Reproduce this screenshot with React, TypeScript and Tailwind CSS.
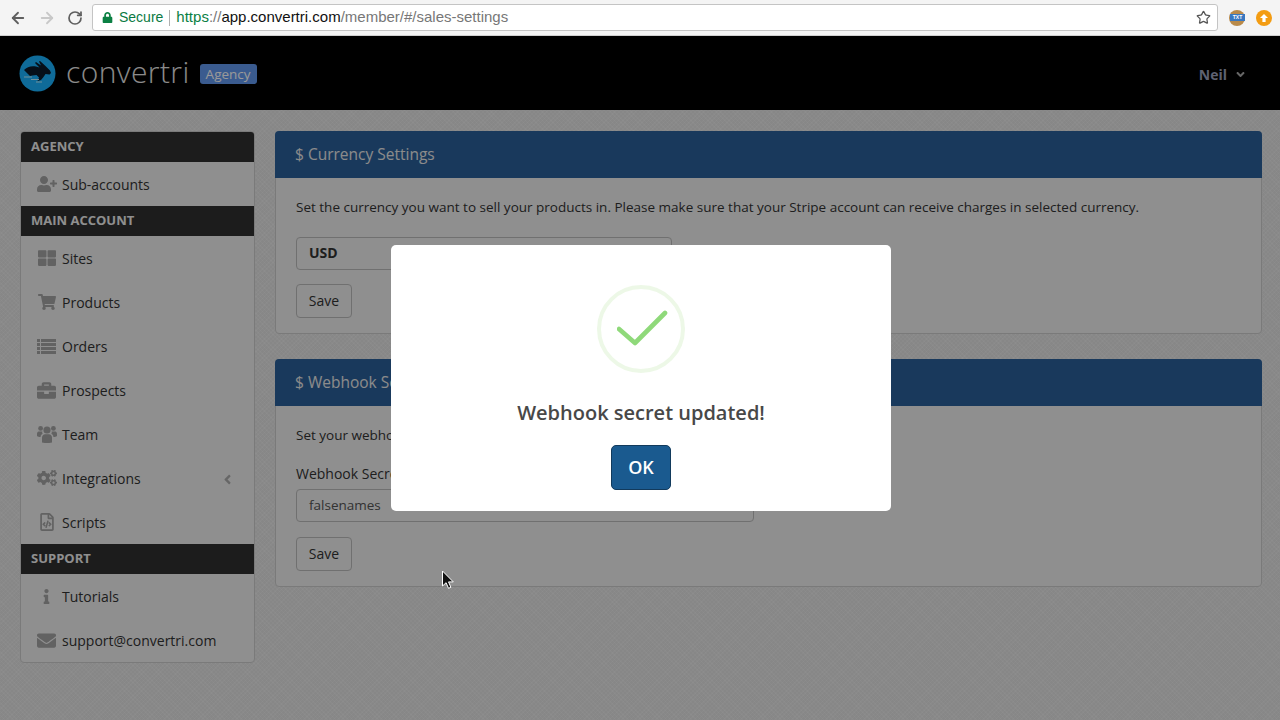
import React from 'react';
import { ArrowLeft, ArrowRight, RotateCw, Star } from 'lucide-react';
import {
  FaAngleDown,
  FaAngleLeft,
  FaBriefcase,
  FaCogs,
  FaEnvelope,
  FaInfo,
  FaLock,
  FaRegFileCode,
  FaShoppingCart,
  FaThLarge,
  FaUserPlus,
} from 'react-icons/fa';

const SectionHead = ({ label }: { label: string }) => (
  <div className="h-[30px] bg-[#2f2f2f] pl-[10px] flex items-center text-[13px] font-bold text-[#eeeeee]">{label}</div>
);

const NavItem = ({ icon, label, caret }: { icon: React.ReactNode; label: string; caret?: boolean }) => (
  <div className="h-[44px] flex items-center text-[14px] text-[#333333]">
    <span className="w-[41px] pl-[10px] flex justify-center text-[#a3a3a3]">{icon}</span>
    <span>{label}</span>
    {caret && <FaAngleLeft size={15} className="ml-auto mr-[19px] mt-[3px] text-[#aaaaaa]" />}
  </div>
);

const Panel = ({ title, children }: { title: string; children: React.ReactNode }) => (
  <div className="bg-[#eeeeee] border border-[#cccccc] rounded-[4px]">
    <div className="h-[47px] -mx-px -mt-px rounded-t-[4px] bg-[#2b5f99] flex items-center pl-[20px] text-[15.5px] text-[#e8e8e8]">
      {title}
    </div>
    <div className="px-[20px]">{children}</div>
  </div>
);

const SaveButton = () => (
  <button className="w-[56px] h-[34px] pb-[1px] border border-[#bbbbbb] rounded-[4px] text-[14px] text-[#333333]">Save</button>
);

const ListIcon = () => (
  <svg width="19" height="15" viewBox="0 0 19 15" fill="currentColor">
    <path d="M0 0h3v3H0zM4 0h15v3H4zM0 4h3v3H0zM4 4h15v3H4zM0 8h3v3H0zM4 8h15v3H4zM0 12h3v3H0zM4 12h15v3H4z" />
  </svg>
);

const UsersIcon = () => (
  <svg width="20" height="18" viewBox="0 0 20 18" fill="currentColor">
    <circle cx="10" cy="5" r="3.6" />
    <circle cx="3.6" cy="3.4" r="2.4" />
    <circle cx="16.4" cy="3.4" r="2.4" />
    <path d="M5 17.5v-5c0-2 1.5-3.3 3-3.3h4c1.5 0 3 1.3 3 3.3v5c-3 .8-7 .8-10 0z" />
    <path d="M0 11V8.8C0 7 1.2 6.4 2.4 6.4h3c-.4 1-.2 1.8.4 2.4C4.4 9.4 3.6 10.4 3.6 12 2 12 1 11.6 0 11zM20 11V8.8c0-1.8-1.2-2.4-2.4-2.4h-3c.4 1 .2 1.8-.4 2.4 1.4.6 2.2 1.6 2.2 3.2 1.6 0 2.6-.4 3.6-1z" />
  </svg>
);

// colours are brightened here because the modal overlay darkens the header too
const Logo = () => (
  <svg width="37" height="37" viewBox="0 0 37 37">
    <circle cx="18.5" cy="18.5" r="18" fill="#19b3ff" />
    <path
      d="M5 15c3-3.5 8-4.5 12-3.5l3.5 1L16 8l1-1 5 3.5-2-4 1-.5 5.5 5 4.5 4.5 1 2.5-1.5 1.5-4-.5-2 3-2.5 3-3.5 1 1.5-3.5-2.5-2.5-4 .5-2.5 .5z"
      fill="#0a1a2a"
    />
    <path d="M5 22h8M12 24.5h8M17 27h6" stroke="#c0f0ff" strokeWidth="1" />
  </svg>
);

const Cursor = () => (
  <svg width="13" height="20" viewBox="0 0 13 20" className="absolute left-[441px] top-[534px]">
    <path d="M1.5 1v15l3.6-3.3 2.4 5.6 2.4-1-2.4-5.4h4.8z" fill="#111111" stroke="#ffffff" strokeWidth="1" />
  </svg>
);

export default function App() {
  return (
    <div className="w-[1280px] h-[720px] overflow-hidden flex flex-col font-['Open_Sans',sans-serif]">
      {/* browser chrome */}
      <div className="h-[36px] shrink-0 bg-[#f4f4f4] border-b border-[#d0d0d0] flex items-center font-['Liberation_Sans',sans-serif]">
        <div className="w-[92px] flex items-center pl-[9px] gap-[11px]">
          <ArrowLeft size={18} strokeWidth={2.4} className="text-[#5f5f5f]" />
          <ArrowRight size={18} strokeWidth={2.4} className="text-[#c8c8c8]" />
          <RotateCw size={16} strokeWidth={2.6} className="text-[#5f5f5f]" />
        </div>
        <div className="w-[1126px] h-[27px] bg-white border border-[#c4c4c4] rounded-[3px] flex items-center pl-[9px] text-[14px]">
          <FaLock size={11} className="text-[#0b8043]" />
          <span className="ml-[6px] text-[#0b7a43]">Secure</span>
          <span className="mx-[6px] h-[16px] w-px bg-[#b0b0b0]" />
          <span className="text-[15px] text-[#0b8043]">https</span>
          <span className="text-[15px] text-[#777777]">://</span>
          <span className="text-[15px] text-[#111111]">app.convertri.com</span>
          <span className="text-[15px] text-[#777777]">/member/#/sales-settings</span>
          <Star size={15} strokeWidth={2} className="ml-auto mr-[6px] text-[#555555]" />
        </div>
        <div className="flex-1 flex items-center pl-[11px] gap-[11px]">
          <span className="relative w-[16px] h-[16px] rounded-full bg-[#b98a4a]">
            <span className="absolute left-[1px] top-[4px] w-[15px] h-[7px] bg-[#3a78c0] text-[5px] leading-[7px] text-white text-center font-bold">
              TXT
            </span>
          </span>
          <span className="w-[16px] h-[16px] rounded-full bg-[#f39c12] flex items-center justify-center">
            <svg width="10" height="10" viewBox="0 0 10 10">
              <path d="M5 1l4 4H6.6v4H3.4V5H1z" fill="#ffffff" />
            </svg>
          </span>
        </div>
      </div>

      <div className="relative flex-1 flex flex-col bg-[#ececec] bg-[repeating-linear-gradient(45deg,rgba(255,255,255,0.02)_0,rgba(255,255,255,0.02)_1px,rgba(0,0,0,0.025)_1px,rgba(0,0,0,0.025)_3px),repeating-linear-gradient(-45deg,rgba(255,255,255,0.02)_0,rgba(255,255,255,0.02)_1px,rgba(0,0,0,0.025)_1px,rgba(0,0,0,0.025)_3px)]">
        {/* top nav */}
        <div className="h-[74px] shrink-0 bg-black flex items-center pl-[19px]">
          <Logo />
          <span className="ml-[10px] text-[30px] font-light tracking-[0.4px] text-[#e8e8e8] leading-none -mt-[3px]">
            convertri
          </span>
          <span className="ml-[10px] mt-[1px] h-[20px] px-[6px] rounded-[3px] bg-[#6298ee] text-[13.5px] leading-[20px] text-white">
            Agency
          </span>
          <div className="ml-auto mr-[33px] mt-[2px] flex items-center text-[14px] font-bold text-[#9ea3be]">
            Neil
            <FaAngleDown size={13} className="ml-[7px] text-[#aaaaaa]" />
          </div>
        </div>

        <div className="flex items-start pl-[20px] pt-[21px] gap-[20px]">
          {/* sidebar */}
          <div className="w-[235px] shrink-0 bg-[#eeeeee] border border-[#cccccc] rounded-[4px] overflow-hidden">
            <SectionHead label="AGENCY" />
            <NavItem icon={<FaUserPlus size={20} />} label="Sub-accounts" />
            <SectionHead label="MAIN ACCOUNT" />
            <NavItem icon={<FaThLarge size={18} />} label="Sites" />
            <NavItem icon={<FaShoppingCart size={18} />} label="Products" />
            <NavItem icon={<ListIcon />} label="Orders" />
            <NavItem icon={<FaBriefcase size={19} />} label="Prospects" />
            <NavItem icon={<UsersIcon />} label="Team" />
            <NavItem icon={<FaCogs size={20} />} label="Integrations" caret />
            <NavItem icon={<FaRegFileCode size={18} />} label="Scripts" />
            <SectionHead label="SUPPORT" />
            <NavItem icon={<FaInfo size={15} />} label="Tutorials" />
            <NavItem icon={<FaEnvelope size={19} />} label="support@convertri.com" />
          </div>

          {/* panels */}
          <div className="w-[987px] flex flex-col gap-[25px]">
            <Panel title="$ Currency Settings">
              <p className="mt-[19px] text-[13.5px] leading-[20px] text-[#333333]">
                Set the currency you want to sell your products in. Please make sure that your Stripe account can receive charges in selected currency.
              </p>
              <div className="mt-[20px] w-[376px] h-[33px] border border-[#bbbbbb] rounded-[4px] flex items-center pl-[12px] pb-[2px] text-[14px] font-bold text-[#333333]">
                USD
              </div>
              <div className="mt-[14px] mb-[15px]">
                <SaveButton />
              </div>
            </Panel>
            <Panel title="$ Webhook Settings">
              <p className="mt-[19px] text-[13.5px] leading-[20px] text-[#333333]">Set your webhook secret.</p>
              <p className="mt-[19px] text-[14px] leading-[20px] font-medium text-[#333333]">Webhook Secret</p>
              <div className="mt-[5px] w-[458px] h-[33px] border border-[#bbbbbb] rounded-[4px] flex items-center pl-[12px] text-[13.5px] text-[#555555]">
                falsenames
              </div>
              <div className="mt-[15px] mb-[15px]">
                <SaveButton />
              </div>
            </Panel>
          </div>
        </div>

        {/* modal overlay */}
        <div className="absolute inset-0 bg-black/40 flex items-center justify-center pl-[2px]">
          <div className="w-[500px] h-[266px] bg-white rounded-[5px] flex flex-col items-center pt-[40px]">
            <div className="relative w-[88px] h-[88px] rounded-full border-[4px] border-[#a5dc86]/20 shrink-0">
              <svg width="54" height="42" viewBox="0 0 54 42" className="absolute left-[16px] top-[20px]">
                <path d="M2 20l16 14L48 4" fill="none" stroke="#8fd97a" strokeWidth="4.6" strokeLinecap="round" strokeLinejoin="round" />
              </svg>
            </div>
            <h2 className="mt-[25px] text-[20px] leading-[30px] font-semibold text-[#484848]">Webhook secret updated!</h2>
            <button className="mt-[17px] w-[60px] h-[45px] pb-[1px] rounded-[5px] bg-[#1a5a8f] border border-[#123a5c] text-[18px] font-semibold text-white">
              OK
            </button>
          </div>
        </div>

        <Cursor />
      </div>
    </div>
  );
}
